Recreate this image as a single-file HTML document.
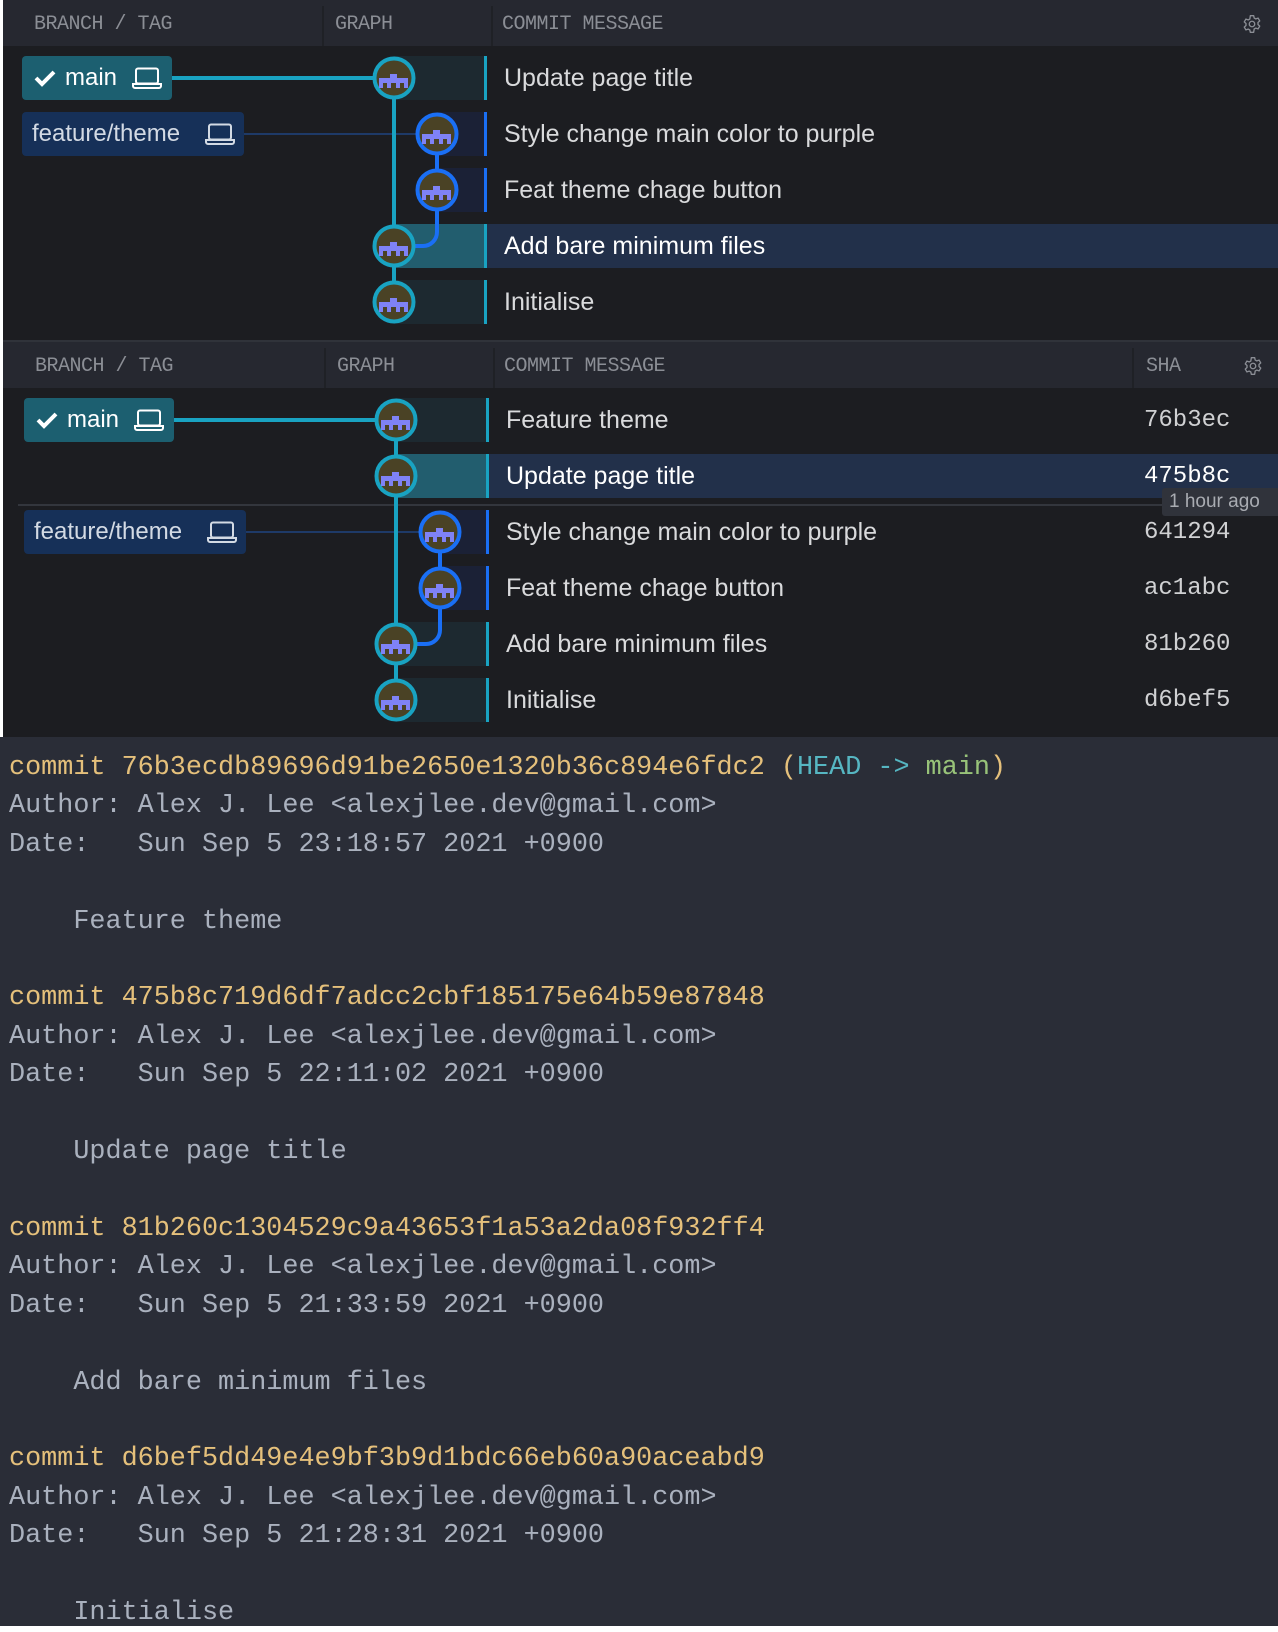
<!DOCTYPE html>
<html><head><meta charset="utf-8">
<style>
*{margin:0;padding:0;box-sizing:border-box}
body{width:1278px;height:1626px;background:#fff;position:relative;overflow:hidden;font-family:"Liberation Sans",sans-serif}
.panel{position:absolute;left:3px;width:1275px;background:#1c1d21;overflow:hidden}
.hdr{position:absolute;left:0;top:0;width:100%;height:46px;background:#262830}
.hdr span{position:absolute;top:0;line-height:50px;font-family:"Liberation Mono",monospace;font-size:20px;color:#8b8e95;letter-spacing:-0.5px}
.div{position:absolute;top:6px;height:40px;width:2px;background:#1f2126}
.a{position:absolute}
.msg{position:absolute;font-size:25px;color:#d9dadc;line-height:44px;white-space:nowrap}
.sha{position:absolute;font-family:"Liberation Mono",monospace;font-size:24px;color:#d0d1d3;line-height:46px}
.tag{position:absolute;height:44px;border-radius:4px;color:#fff;font-size:24px;line-height:44px}
.term{position:absolute;left:0;top:737px;width:1278px;height:889px;background:#2a2d37;font-family:"Liberation Mono",monospace;font-size:26.8px;line-height:38.4px;color:#aab1be;white-space:pre;padding:12px 0 0 9px}
.y{color:#e5c07b}.c{color:#56b6c2}.g{color:#98c379}
</style></head><body>
<svg width="0" height="0" style="position:absolute">
<defs>
<symbol id="av" viewBox="-22 -22 44 44">
<rect x="-4" y="-4" width="7" height="4" fill="#7f82f5"/>
<rect x="-15" y="0" width="29" height="5" fill="#7f82f5"/>
<rect x="-15" y="5" width="4" height="5" fill="#7f82f5"/>
<rect x="-7" y="5" width="4" height="5" fill="#7f82f5"/>
<rect x="2" y="5" width="4" height="5" fill="#7f82f5"/>
<rect x="10" y="5" width="4" height="5" fill="#7f82f5"/>
</symbol>
<symbol id="lap" viewBox="0 0 30 22">
<rect x="4" y="1.5" width="22" height="15" rx="2" fill="none" stroke="currentColor" stroke-width="2"/>
<path d="M1 17h28v2a2 2 0 0 1-2 2H3a2 2 0 0 1-2-2z" fill="none" stroke="currentColor" stroke-width="2"/>
</symbol>
<symbol id="gear" viewBox="0 0 24 24">
<path d="M10 2h4l.6 2.8 2 1.1 2.7-1 2 3.4-2.1 1.9v2.4l2.1 1.9-2 3.4-2.7-1-2 1.1L14 22h-4l-.6-2.8-2-1.1-2.7 1-2-3.4 2.1-1.9v-2.4L2.7 9.5l2-3.4 2.7 1 2-1.1z" fill="none" stroke="#8b8e95" stroke-width="1.6" stroke-linejoin="round"/>
<circle cx="12" cy="12" r="3.3" fill="none" stroke="#8b8e95" stroke-width="1.6"/>
</symbol>
</defs></svg>

<!-- PANEL 1 -->
<div class="panel" style="top:0;height:340px">
 <div class="hdr">
  <span style="left:31px">BRANCH / TAG</span>
  <div class="div" style="left:319px"></div>
  <span style="left:332px">GRAPH</span>
  <div class="div" style="left:488px"></div>
  <span style="left:499px">COMMIT MESSAGE</span>
  <svg class="a" style="left:1239px;top:14px" width="20" height="20"><use href="#gear"/></svg>
 </div>
 <div class="a" style="left:391px;top:56px;width:90px;height:44px;background:#1d2930"></div>
 <div class="a" style="left:434px;top:112px;width:47px;height:44px;background:#1b2136"></div>
 <div class="a" style="left:434px;top:168px;width:47px;height:44px;background:#1b2136"></div>
 <div class="a" style="left:391px;top:224px;width:90px;height:44px;background:#225d6e"></div>
 <div class="a" style="left:484px;top:224px;width:800px;height:44px;background:#22304a"></div>
 <div class="a" style="left:391px;top:280px;width:90px;height:44px;background:#1d2930"></div>
 <div class="a" style="left:481px;top:56px;width:3px;height:44px;background:#19a3c2"></div>
 <div class="a" style="left:481px;top:112px;width:3px;height:44px;background:#1a6ff5"></div>
 <div class="a" style="left:481px;top:168px;width:3px;height:44px;background:#1a6ff5"></div>
 <div class="a" style="left:481px;top:224px;width:3px;height:44px;background:#19a3c2"></div>
 <div class="a" style="left:481px;top:280px;width:3px;height:44px;background:#19a3c2"></div>
 <svg class="a" style="left:0;top:0" width="500" height="340">
  <line x1="168" y1="78" x2="372" y2="78" stroke="#19a3c2" stroke-width="4"/>
  <line x1="240" y1="134" x2="414" y2="134" stroke="#1e3a68" stroke-width="2"/>
  <line x1="391" y1="78" x2="391" y2="302" stroke="#19a3c2" stroke-width="4"/>
  <path d="M434 134V232a14 14 0 0 1-14 14H395" fill="none" stroke="#1a6ff5" stroke-width="4"/>
  <circle cx="391" cy="78" r="19.5" fill="#4a4225" stroke="#19a3c2" stroke-width="4"/><use href="#av" x="369" y="56" width="44" height="44"/>
  <circle cx="434" cy="134" r="19.5" fill="#4a4225" stroke="#1a6ff5" stroke-width="4"/><use href="#av" x="412" y="112" width="44" height="44"/>
  <circle cx="434" cy="190" r="19.5" fill="#4a4225" stroke="#1a6ff5" stroke-width="4"/><use href="#av" x="412" y="168" width="44" height="44"/>
  <circle cx="391" cy="246" r="19.5" fill="#4a4225" stroke="#19a3c2" stroke-width="4"/><use href="#av" x="369" y="224" width="44" height="44"/>
  <circle cx="391" cy="302" r="19.5" fill="#4a4225" stroke="#19a3c2" stroke-width="4"/><use href="#av" x="369" y="280" width="44" height="44"/>
 </svg>
 <div class="tag" style="left:19px;top:56px;width:150px;background:#1c5f70">
  <svg class="a" style="left:12px;top:13px" width="22" height="18" viewBox="0 0 22 18"><path d="M2 9l6 6L20 3" fill="none" stroke="#fff" stroke-width="4"/></svg>
  <span class="a" style="left:43px">main</span>
  <svg class="a" style="left:110px;top:11px;color:#fff" width="30" height="22"><use href="#lap"/></svg>
 </div>
 <div class="tag" style="left:19px;top:112px;width:222px;background:#163058;color:#d3dae4">
  <span class="a" style="left:10px">feature/theme</span>
  <svg class="a" style="left:183px;top:11px;color:#d3dae4" width="30" height="22"><use href="#lap"/></svg>
 </div>
 <div class="msg" style="left:501px;top:56px">Update page title</div>
 <div class="msg" style="left:501px;top:112px">Style change main color to purple</div>
 <div class="msg" style="left:501px;top:168px">Feat theme chage button</div>
 <div class="msg" style="left:501px;top:224px;color:#fff">Add bare minimum files</div>
 <div class="msg" style="left:501px;top:280px">Initialise</div>
</div>

<!-- PANEL 2 -->
<div class="panel" style="top:340px;height:397px;border-top:2px solid #30333a">
 <div class="hdr">
  <span style="left:32px">BRANCH / TAG</span>
  <div class="div" style="left:321px"></div>
  <span style="left:334px">GRAPH</span>
  <div class="div" style="left:490px"></div>
  <span style="left:501px">COMMIT MESSAGE</span>
  <div class="div" style="left:1129px"></div>
  <span style="left:1143px">SHA</span>
  <svg class="a" style="left:1240px;top:14px" width="20" height="20"><use href="#gear"/></svg>
 </div>
 <div class="a" style="left:15px;top:162px;width:1270px;height:2px;background:#33363d"></div>
 <div class="a" style="left:393px;top:56px;width:90px;height:44px;background:#1d2930"></div>
 <div class="a" style="left:393px;top:112px;width:90px;height:44px;background:#225d6e"></div>
 <div class="a" style="left:486px;top:112px;width:800px;height:44px;background:#22304a"></div>
 <div class="a" style="left:437px;top:168px;width:46px;height:44px;background:#1b2136"></div>
 <div class="a" style="left:437px;top:224px;width:46px;height:44px;background:#1b2136"></div>
 <div class="a" style="left:393px;top:280px;width:90px;height:44px;background:#1d2930"></div>
 <div class="a" style="left:393px;top:336px;width:90px;height:44px;background:#1d2930"></div>
 <div class="a" style="left:483px;top:56px;width:3px;height:44px;background:#19a3c2"></div>
 <div class="a" style="left:483px;top:112px;width:3px;height:44px;background:#19a3c2"></div>
 <div class="a" style="left:483px;top:168px;width:3px;height:44px;background:#1a6ff5"></div>
 <div class="a" style="left:483px;top:224px;width:3px;height:44px;background:#1a6ff5"></div>
 <div class="a" style="left:483px;top:280px;width:3px;height:44px;background:#19a3c2"></div>
 <div class="a" style="left:483px;top:336px;width:3px;height:44px;background:#19a3c2"></div>
 <svg class="a" style="left:0;top:0" width="500" height="397">
  <line x1="168" y1="78" x2="374" y2="78" stroke="#19a3c2" stroke-width="4"/>
  <line x1="242" y1="190" x2="418" y2="190" stroke="#1e3a68" stroke-width="2"/>
  <line x1="393" y1="78" x2="393" y2="358" stroke="#19a3c2" stroke-width="4"/>
  <path d="M437 190V288a14 14 0 0 1-14 14H397" fill="none" stroke="#1a6ff5" stroke-width="4"/>
  <circle cx="393" cy="78" r="19.5" fill="#4a4225" stroke="#19a3c2" stroke-width="4"/><use href="#av" x="371" y="56" width="44" height="44"/>
  <circle cx="393" cy="134" r="19.5" fill="#4a4225" stroke="#19a3c2" stroke-width="4"/><use href="#av" x="371" y="112" width="44" height="44"/>
  <circle cx="437" cy="190" r="19.5" fill="#4a4225" stroke="#1a6ff5" stroke-width="4"/><use href="#av" x="415" y="168" width="44" height="44"/>
  <circle cx="437" cy="246" r="19.5" fill="#4a4225" stroke="#1a6ff5" stroke-width="4"/><use href="#av" x="415" y="224" width="44" height="44"/>
  <circle cx="393" cy="302" r="19.5" fill="#4a4225" stroke="#19a3c2" stroke-width="4"/><use href="#av" x="371" y="280" width="44" height="44"/>
  <circle cx="393" cy="358" r="19.5" fill="#4a4225" stroke="#19a3c2" stroke-width="4"/><use href="#av" x="371" y="336" width="44" height="44"/>
 </svg>
 <div class="tag" style="left:21px;top:56px;width:150px;background:#1c5f70">
  <svg class="a" style="left:12px;top:13px" width="22" height="18" viewBox="0 0 22 18"><path d="M2 9l6 6L20 3" fill="none" stroke="#fff" stroke-width="4"/></svg>
  <span class="a" style="left:43px">main</span>
  <svg class="a" style="left:110px;top:11px;color:#fff" width="30" height="22"><use href="#lap"/></svg>
 </div>
 <div class="tag" style="left:21px;top:168px;width:222px;background:#163058;color:#d3dae4">
  <span class="a" style="left:10px">feature/theme</span>
  <svg class="a" style="left:183px;top:11px;color:#d3dae4" width="30" height="22"><use href="#lap"/></svg>
 </div>
 <div class="msg" style="left:503px;top:56px">Feature theme</div>
 <div class="msg" style="left:503px;top:112px;color:#fff">Update page title</div>
 <div class="msg" style="left:503px;top:168px">Style change main color to purple</div>
 <div class="msg" style="left:503px;top:224px">Feat theme chage button</div>
 <div class="msg" style="left:503px;top:280px">Add bare minimum files</div>
 <div class="msg" style="left:503px;top:336px">Initialise</div>
 <div class="sha" style="left:1141px;top:56px">76b3ec</div>
 <div class="sha" style="left:1141px;top:112px;color:#fff">475b8c</div>
 <div class="sha" style="left:1141px;top:168px">641294</div>
 <div class="sha" style="left:1141px;top:224px">ac1abc</div>
 <div class="sha" style="left:1141px;top:280px">81b260</div>
 <div class="sha" style="left:1141px;top:336px">d6bef5</div>
 <div class="a" style="left:1159px;top:146px;width:120px;height:28px;background:#30333b;border-radius:3px;color:#a9acb2;font-size:19px;line-height:28px;padding-left:7px">1 hour ago</div>
</div>

<div class="term"><span class="y">commit 76b3ecdb89696d91be2650e1320b36c894e6fdc2 (<span class="c">HEAD -&gt; </span><span class="g">main</span>)</span>
Author: Alex J. Lee &lt;alexjlee.dev@gmail.com&gt;
Date:   Sun Sep 5 23:18:57 2021 +0900

    Feature theme

<span class="y">commit 475b8c719d6df7adcc2cbf185175e64b59e87848</span>
Author: Alex J. Lee &lt;alexjlee.dev@gmail.com&gt;
Date:   Sun Sep 5 22:11:02 2021 +0900

    Update page title

<span class="y">commit 81b260c1304529c9a43653f1a53a2da08f932ff4</span>
Author: Alex J. Lee &lt;alexjlee.dev@gmail.com&gt;
Date:   Sun Sep 5 21:33:59 2021 +0900

    Add bare minimum files

<span class="y">commit d6bef5dd49e4e9bf3b9d1bdc66eb60a90aceabd9</span>
Author: Alex J. Lee &lt;alexjlee.dev@gmail.com&gt;
Date:   Sun Sep 5 21:28:31 2021 +0900

    Initialise</div>
</body></html>
